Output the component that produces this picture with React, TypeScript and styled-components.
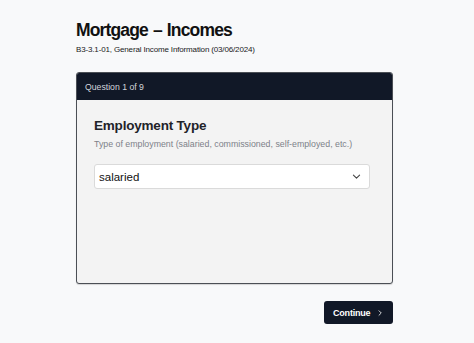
import React from 'react';
import styled, { createGlobalStyle } from 'styled-components';

const GlobalStyle = createGlobalStyle`
  html, body {
    margin: 0;
    padding: 0;
    background: #f8f9fa;
    font-family: "Liberation Sans", Arial, sans-serif;
  }
`;

const Page = styled.main`
  width: 317px;
  margin-left: 76px;
  padding-top: 19px;
  box-sizing: border-box;
`;

const Title = styled.h1`
  margin: 0;
  font-size: 17.5px;
  line-height: 22px;
  font-weight: 700;
  color: #111111;
  letter-spacing: -0.85px;
  word-spacing: 1px;
`;

const Subtitle = styled.p`
  margin: 3px 0 0;
  font-size: 8px;
  line-height: 12px;
  color: #1a1a1a;
  letter-spacing: -0.15px;
`;

const Card = styled.section`
  margin-top: 16px;
  height: 212px;
  box-sizing: border-box;
  border: 1px solid #4b4f55;
  border-radius: 3px;
  background: #f3f3f3;
  box-shadow: 0 1px 1px rgba(0, 0, 0, 0.15);
  overflow: hidden;
  display: flex;
  flex-direction: column;
`;

const CardHeader = styled.div`
  height: 27px;
  flex-shrink: 0;
  background: #111827;
  color: #d1d5db;
  font-size: 8.7px;
  display: flex;
  align-items: center;
  padding-left: 8px;
`;

const CardBody = styled.div`
  padding: 17px 22px 0 17px;
`;

const QuestionTitle = styled.h2`
  margin: 0;
  font-size: 13.5px;
  line-height: 18px;
  font-weight: 700;
  color: #1f2329;
  letter-spacing: -0.2px;
`;

const QuestionHint = styled.p`
  margin: 3px 0 0;
  font-size: 8.8px;
  line-height: 12px;
  color: #7d8189;
`;

const SelectBox = styled.div`
  margin-top: 14px;
  height: 25px;
  box-sizing: border-box;
  background: #ffffff;
  border: 1px solid #dadada;
  border-radius: 3px;
  display: flex;
  align-items: center;
  justify-content: space-between;
  padding: 0 7px 0 4px;
  font-size: 11.5px;
  color: #111111;
`;

const Footer = styled.div`
  display: flex;
  justify-content: flex-end;
  margin-top: 17px;
`;

const ContinueButton = styled.button`
  height: 23px;
  width: 69px;
  border: none;
  border-radius: 3px;
  background: #111827;
  color: #ffffff;
  font-family: inherit;
  font-size: 9px;
  font-weight: 700;
  letter-spacing: -0.2px;
  display: flex;
  align-items: center;
  justify-content: space-between;
  padding: 0 9px 0 9px;
  box-sizing: border-box;
  cursor: pointer;
`;

const Chevron = ({ dir, size, color }: { dir: 'down' | 'right'; size: number; color: string }) => (
  <svg width={size} height={size} viewBox="0 0 16 16" fill="none">
    <path
      d={dir === 'down' ? 'M3.5 6l4.5 4.5L12.5 6' : 'M6 3.5l4.5 4.5L6 12.5'}
      stroke={color}
      strokeWidth="1.6"
      strokeLinecap="round"
      strokeLinejoin="round"
    />
  </svg>
);

const App = () => (
  <>
    <GlobalStyle />
    <Page>
      <Title>Mortgage – Incomes</Title>
      <Subtitle>B3-3.1-01, General Income Information (03/06/2024)</Subtitle>
      <Card>
        <CardHeader>Question 1 of 9</CardHeader>
        <CardBody>
          <QuestionTitle>Employment Type</QuestionTitle>
          <QuestionHint>Type of employment (salaried, commissioned, self-employed, etc.)</QuestionHint>
          <SelectBox>
            <span>salaried</span>
            <Chevron dir="down" size={11} color="#444" />
          </SelectBox>
        </CardBody>
      </Card>
      <Footer>
        <ContinueButton>
          Continue
          <Chevron dir="right" size={8} color="#fff" />
        </ContinueButton>
      </Footer>
    </Page>
  </>
);

export default App;
